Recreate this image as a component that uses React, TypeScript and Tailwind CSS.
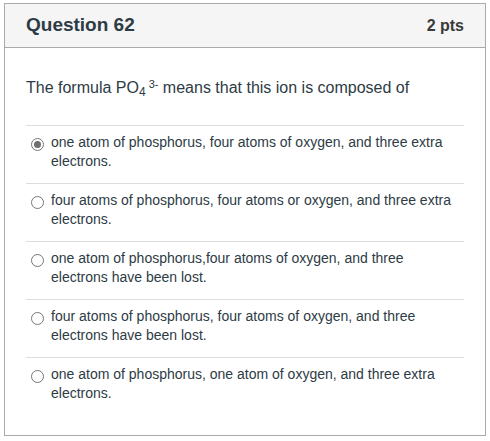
const options = [
  { text: "one atom of phosphorus, four atoms of oxygen, and three extra electrons.", checked: true },
  { text: "four atoms of phosphorus, four atoms or oxygen, and three extra electrons.", checked: false },
  { text: "one atom of phosphorus,four atoms of oxygen, and three electrons have been lost.", checked: false },
  { text: "four atoms of phosphorus, four atoms of oxygen, and three electrons have been lost.", checked: false },
  { text: "one atom of phosphorus, one atom of oxygen, and three extra electrons.", checked: false },
];

function Radio({ checked }: { checked: boolean }) {
  return (
    <span className="mt-[5px] flex h-[13px] w-[13px] shrink-0 items-center justify-center rounded-full border border-[#767676] bg-white">
      {checked && <span className="h-[7px] w-[7px] rounded-full bg-[#6f6f6f]" />}
    </span>
  );
}

export default function App() {
  return (
    <div className="h-[441px] w-[490px] bg-white pl-[4px] pt-[3px] font-['Liberation_Sans',Arial,sans-serif] text-[#2d3b45]">
      <div className="h-[433px] w-[482px] border border-[#aaa]">
        <div className="flex h-[44px] items-center justify-between border-b border-[#aaa] bg-[#f5f5f5] px-[21px]">
          <h2 className="text-[19px] font-bold">Question 62</h2>
          <span className="text-[16px] font-bold text-[#3a3a3a]">2 pts</span>
        </div>
        <div className="px-[21px]">
          <p className="mt-[30px] text-[16px] leading-[20px]">
            The formula PO<sub className="text-[12px]">4</sub>
            <sup className="ml-[3px] text-[11px]">3-</sup> means that this ion is composed of
          </p>
          <div className="mt-[27px]">
            {options.map((o, i) => (
              <div
                key={i}
                className="flex gap-[7px] border-t border-[#ddd] pb-[12px] pl-[5px] pr-[4px] pt-[7px] text-[14px] leading-[19px]"
              >
                <Radio checked={o.checked} />
                <span>{o.text}</span>
              </div>
            ))}
          </div>
        </div>
      </div>
    </div>
  );
}
